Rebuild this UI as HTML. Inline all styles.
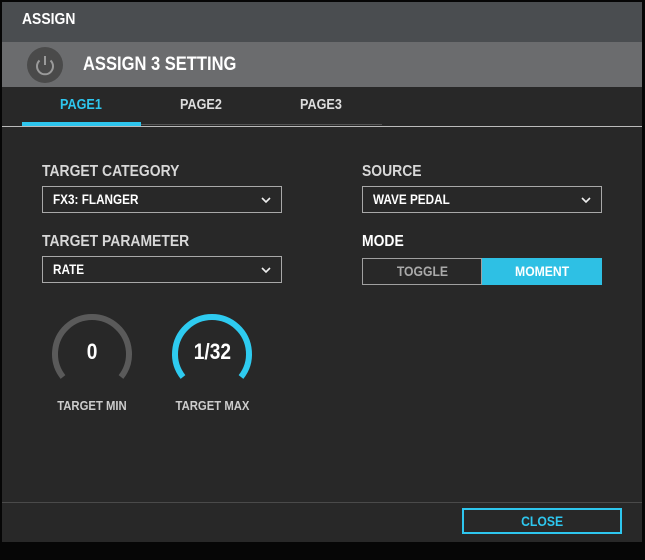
<!DOCTYPE html>
<html><head><style>
body{margin:0;width:645px;height:560px;background:#060606;overflow:hidden;font-family:"Liberation Sans",sans-serif;font-weight:bold;position:relative}
.a{position:absolute}
.n{display:inline-block;transform:scaleX(0.87);transform-origin:left center;white-space:nowrap}
.c{display:inline-block;transform:scaleX(0.87);transform-origin:center center;white-space:nowrap}
.win{left:2px;top:2px;width:640px;height:540px;background:#282828}
.lbl{color:#d8d8d8;font-size:16px}
.sel{border:1px solid #a8a8a8;height:27px;box-sizing:border-box;color:#fff;font-size:13.5px;line-height:25px;padding-left:10px}
.sel svg{position:absolute;right:10px;top:10px}
</style></head><body>
<div class="a win"></div>
<div class="a" style="left:2px;top:2px;width:640px;height:40px;background:#4a4d50"></div>
<div class="a" style="left:22px;top:11px;color:#fff;font-size:16px"><span class="n">ASSIGN</span></div>
<div class="a" style="left:2px;top:42px;width:640px;height:45px;background:#6b6c6e"></div>
<div class="a" style="left:27px;top:47px;width:36px;height:36px;border-radius:50%;background:#4a4a4a"></div>
<svg class="a" style="left:27px;top:47px" width="36" height="36"><path d="M12.5 13.5 A8 8 0 1 0 23.5 13.5" fill="none" stroke="#9a9a9a" stroke-width="2"/><line x1="18" y1="9" x2="18" y2="18" stroke="#9a9a9a" stroke-width="2"/></svg>
<div class="a" style="left:83px;top:54px;color:#fff;font-size:19px"><span class="n">ASSIGN 3 SETTING</span></div>
<div class="a" style="left:60px;top:97px;color:#2ec6ee;font-size:14.5px"><span class="n">PAGE1</span></div>
<div class="a" style="left:180px;top:97px;color:#ddd;font-size:14.5px"><span class="n">PAGE2</span></div>
<div class="a" style="left:300px;top:97px;color:#ddd;font-size:14.5px"><span class="n">PAGE3</span></div>
<div class="a" style="left:22px;top:124px;width:360px;height:1px;background:#555"></div>
<div class="a" style="left:22px;top:122px;width:119px;height:4px;background:#2ec6ee"></div>
<div class="a" style="left:2px;top:126px;width:640px;height:1px;background:#bbb"></div>

<div class="a lbl" style="left:42px;top:163px"><span class="n">TARGET CATEGORY</span></div>
<div class="a sel" style="left:42px;top:186px;width:240px"><span class="n">FX3: FLANGER</span><svg width="10" height="7"><path d="M1 1L5 5L9 1" fill="none" stroke="#eee" stroke-width="1.6"/></svg></div>
<div class="a lbl" style="left:42px;top:233px"><span class="n">TARGET PARAMETER</span></div>
<div class="a sel" style="left:42px;top:256px;width:240px"><span class="n">RATE</span><svg width="10" height="7"><path d="M1 1L5 5L9 1" fill="none" stroke="#eee" stroke-width="1.6"/></svg></div>
<div class="a lbl" style="left:362px;top:163px"><span class="n">SOURCE</span></div>
<div class="a sel" style="left:362px;top:186px;width:240px"><span class="n">WAVE PEDAL</span><svg width="10" height="7"><path d="M1 1L5 5L9 1" fill="none" stroke="#eee" stroke-width="1.6"/></svg></div>
<div class="a lbl" style="left:362px;top:233px;color:#fff"><span class="n">MODE</span></div>
<div class="a" style="left:362px;top:258px;width:120px;height:27px;box-sizing:border-box;border:1px solid #a0a0a0;color:#aaa;font-size:14px;text-align:center;line-height:25px"><span class="c">TOGGLE</span></div>
<div class="a" style="left:482px;top:258px;width:120px;height:27px;background:#2ec0e4;color:#fff;font-size:14px;text-align:center;line-height:27px"><span class="c">MOMENT</span></div>

<svg class="a" style="left:0;top:300px" width="300" height="90">
<path d="M63 77 A37 37 0 1 1 121 77" fill="none" stroke="#5a5a5a" stroke-width="6"/>
<path d="M183 77 A37 37 0 1 1 241 77" fill="none" stroke="#2ecbf0" stroke-width="6"/>
</svg>
<div class="a" style="left:52px;top:339px;width:80px;text-align:center;color:#fff;font-size:22px"><span class="c">0</span></div>
<div class="a" style="left:172px;top:339px;width:80px;text-align:center;color:#fff;font-size:22px"><span class="c">1/32</span></div>
<div class="a" style="left:42px;top:398px;width:100px;text-align:center;color:#ccc;font-size:13px"><span class="c">TARGET MIN</span></div>
<div class="a" style="left:162px;top:398px;width:100px;text-align:center;color:#ccc;font-size:13px"><span class="c">TARGET MAX</span></div>

<div class="a" style="left:2px;top:502px;width:640px;height:1px;background:#4a4a4a"></div>
<div class="a" style="left:462px;top:508px;width:160px;height:26px;box-sizing:border-box;border:2px solid #2ec6ee;color:#2ec6ee;font-size:14px;text-align:center;line-height:22px"><span class="c">CLOSE</span></div>
</body></html>
